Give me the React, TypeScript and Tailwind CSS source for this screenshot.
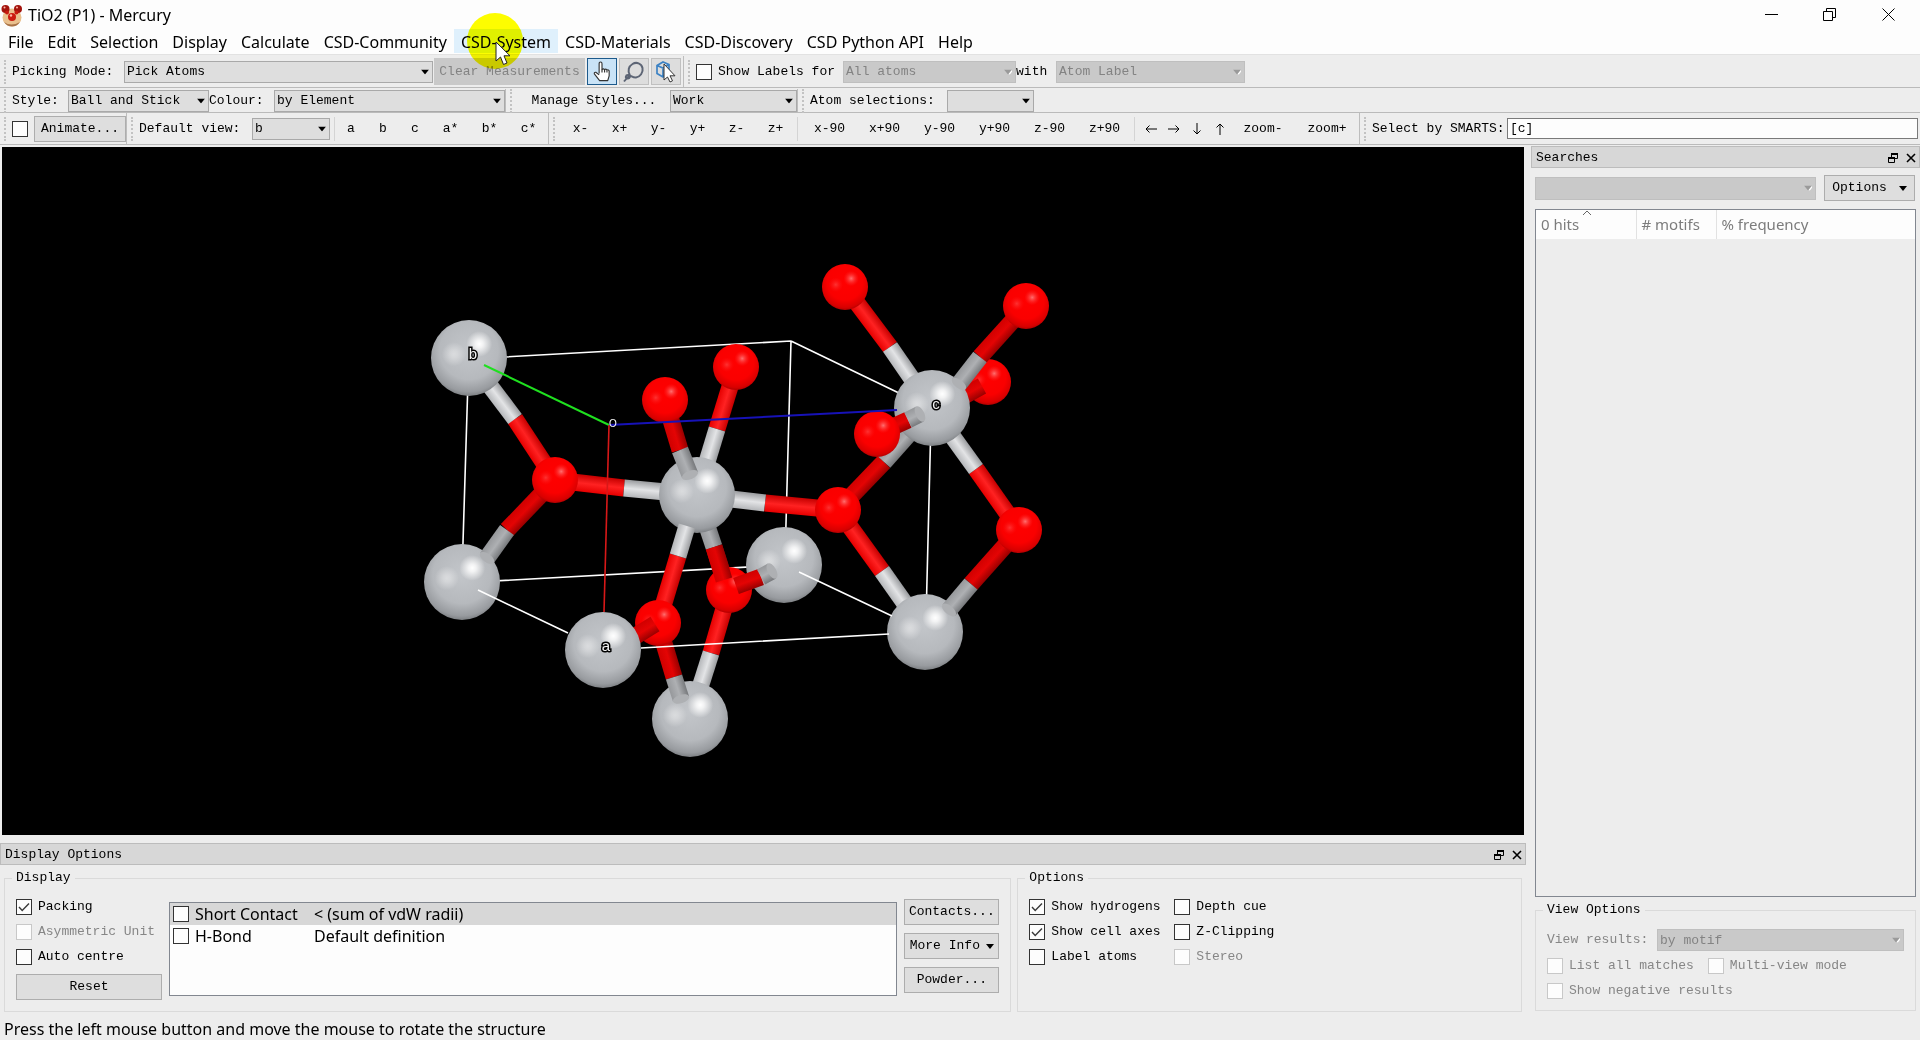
import { useId, useState } from 'react';
import type { ReactNode } from 'react';

const MONO = "font-['Liberation_Mono',monospace] text-[13px]";
const SANS = "font-['Noto_Sans','Open_Sans',sans-serif]";

/* ---------- small controls ---------- */

function Grip() {
  return <span className="ml-1 mr-1.5 h-6 w-0 shrink-0 border-l-2 border-dotted border-[#c2c2c2]" />;
}

function Divider() {
  return <span className="w-px shrink-0 self-stretch bg-[#bdbdbd]" />;
}

interface PickerProps {
  label: string;
  value: string;
  className: string;
  disabled?: boolean;
}

function Picker({ label, value, className, disabled }: PickerProps) {
  return (
    <span className={`relative inline-flex ${className}`}>
      <select
        aria-label={label}
        disabled={disabled}
        defaultValue={value}
        className={`h-full w-full appearance-none border pl-0.5 pr-5 leading-none ${
          disabled ? 'border-[#bfbfbf] bg-[#c9c9c9] text-[#838383] opacity-100' : 'border-[#a9a9a9] bg-[#dedede] text-black'
        }`}
      >
        <option>{value}</option>
      </select>
      <svg viewBox="0 0 8 5" className="pointer-events-none absolute right-1 top-1/2 h-[5px] w-2 -translate-y-1/2">
        {disabled && <path d="M5 5L8 1" stroke="#fff" strokeWidth="1.5" />}
        <path d="M0 0h8L4 5z" fill={disabled ? '#9a9a9a' : '#000'} />
      </svg>
    </span>
  );
}

interface TickProps {
  label: string;
  checked?: boolean;
  disabled?: boolean;
  hideLabel?: boolean;
}

function Tick({ label, checked = false, disabled, hideLabel }: TickProps) {
  const [on, setOn] = useState(checked);
  return (
    <label className={`flex h-4 items-center gap-1.5 whitespace-nowrap ${disabled ? 'text-[#868686]' : 'text-black'}`}>
      <span className="relative flex size-4 shrink-0">
        <input
          type="checkbox"
          aria-label={label}
          checked={on}
          disabled={disabled}
          onChange={(e) => setOn(e.target.checked)}
          className={`size-4 appearance-none border bg-[#fdfdfd] ${disabled ? 'border-[#c8c8c8]' : 'border-[#333333]'}`}
        />
        {on && (
          <svg viewBox="0 0 16 16" className="pointer-events-none absolute inset-0 size-4">
            <path d="M3 8l3.2 3.5L13 4.5" fill="none" stroke="#3a3a3a" strokeWidth="1.4" />
          </svg>
        )}
      </span>
      {!hideLabel && label}
    </label>
  );
}

function PushButton({ children, className = '' }: { children: ReactNode; className?: string }) {
  return (
    <button className={`flex items-center justify-center whitespace-nowrap border border-[#adadad] bg-[#dedede] text-black ${className}`}>
      {children}
    </button>
  );
}

function FlatButtons({ items, className }: { items: string[]; className: string }) {
  return (
    <>
      {items.map((item) => (
        <button key={item} className={`shrink-0 whitespace-nowrap text-center ${className}`}>
          {item}
        </button>
      ))}
    </>
  );
}

function DockTitle({ title }: { title: string }) {
  return (
    <div className="flex h-[22px] shrink-0 items-center border border-[#bcbcbc] bg-[#d7d7d7] pl-1 pr-[3px] pt-0.5">
      <h2 className="flex-1">{title}</h2>
      <button aria-label={`Float ${title}`} className="mr-2">
        <svg viewBox="0 0 10 10" className="size-[10px]" fill="none" stroke="#000" strokeWidth="1">
          <path d="M3.5 4V.5h6v5H7" />
          <path d="M3 1h7" strokeWidth="2" />
          <path d="M.5 4.5h6v5h-6z" />
          <path d="M0 5h7" strokeWidth="2" />
        </svg>
      </button>
      <button aria-label={`Close ${title}`}>
        <svg viewBox="0 0 10 10" className="size-[10px]" stroke="#000" strokeWidth="1.6">
          <path d="M1 1l8 8M9 1L1 9" />
        </svg>
      </button>
    </div>
  );
}

function Arrow({ turn, label }: { turn: number; label: string }) {
  return (
    <button aria-label={label} className="flex w-[23px] shrink-0 justify-center">
      <svg viewBox="0 0 12 12" className="size-3" fill="none" stroke="#000" strokeWidth="1">
        <path transform={`rotate(${turn} 6 6)`} d="M12 6H1M4.5 2.5L1 6l3.5 3.5" />
      </svg>
    </button>
  );
}

/* ---------- structure ---------- */

type Point = [number, number];
type Kind = 'Ti' | 'O';

function Atom({ at: [x, y], kind }: { at: Point; kind: Kind }) {
  const r = kind === 'Ti' ? 38 : 23;
  return (
    <g>
      <circle cx={x} cy={y} r={r} fill={`url(#${kind})`} />
      <circle cx={x + r * 0.27} cy={y - r * 0.37} r={r * 0.34} fill={`url(#${kind}-shine)`} />
      <circle cx={x - r * 0.4} cy={y - r * 0.1} r={r * 0.32} fill={`url(#${kind}-shine)`} opacity="0.45" />
    </g>
  );
}

interface RodProps {
  from: Point;
  to: Point;
  kind: Kind;
  cap?: boolean;
  dim?: boolean;
}

/* Half of a bond, shaded across its width */
function Rod({ from, to, kind, cap, dim }: RodProps) {
  const id = useId();
  const width = 17;
  const [x1, y1] = from;
  const [x2, y2] = to;
  const length = Math.hypot(x2 - x1, y2 - y1);
  let nx = (-(y2 - y1) / length) * (width / 2);
  let ny = ((x2 - x1) / length) * (width / 2);
  if (nx < 0) {
    nx = -nx;
    ny = -ny;
  }
  const shades = kind === 'Ti'
    ? dim ? ['#96989b', '#aeb0b3', '#77797c'] : ['#b4b6b9', '#e3e4e6', '#9a9c9f']
    : dim ? ['#d00000', '#e40404', '#980000'] : ['#e60000', '#ff2222', '#c60000'];
  return (
    <g>
      <linearGradient id={id} gradientUnits="userSpaceOnUse" x1={x1 - nx} y1={y1 - ny} x2={x1 + nx} y2={y1 + ny}>
        <stop offset="0" stopColor={shades[0]} />
        <stop offset="0.5" stopColor={shades[1]} />
        <stop offset="1" stopColor={shades[2]} />
      </linearGradient>
      <path d={`M${x1 - nx} ${y1 - ny}L${x2 - nx} ${y2 - ny}L${x2 + nx} ${y2 + ny}L${x1 + nx} ${y1 + ny}Z`} fill={`url(#${id})`} />
      {cap && (
        <ellipse
          cx={x1}
          cy={y1}
          rx={width / 2}
          ry={width / 4}
          transform={`rotate(${(Math.atan2(ny, nx) * 180) / Math.PI} ${x1} ${y1})`}
          fill={shades[1]}
        />
      )}
    </g>
  );
}

interface BondProps {
  ti: Point;
  mid: Point;
  o: Point;
  cap?: boolean;
  dim?: boolean;
}

function Bond({ ti, mid, o, cap, dim }: BondProps) {
  return (
    <>
      <Rod from={mid} to={o} kind="O" dim={dim} />
      <Rod from={ti} to={mid} kind="Ti" cap={cap} dim={dim} />
    </>
  );
}

function AxisLabel({ at: [x, y], children }: { at: Point; children: string }) {
  return (
    <text x={x} y={y} textAnchor="middle" fontSize="15" fontFamily="Liberation Sans" fill="#f4f4f4" stroke="#000" strokeWidth="3" paintOrder="stroke">
      {children}
    </text>
  );
}

function Structure() {
  return (
    <svg viewBox="2 147 1522 688" className="block h-full w-full bg-black" role="img" aria-label="TiO2 unit cell">
      <defs>
        <radialGradient id="Ti" cx="0.5" cy="0.4" r="0.64">
          <stop offset="0" stopColor="#c3c6ca" />
          <stop offset="0.6" stopColor="#b6b9bd" />
          <stop offset="0.85" stopColor="#989b9f" />
          <stop offset="1" stopColor="#6a6d70" />
        </radialGradient>
        <radialGradient id="O" cx="0.5" cy="0.4" r="0.64">
          <stop offset="0" stopColor="#ff0000" />
          <stop offset="0.6" stopColor="#fa0000" />
          <stop offset="0.85" stopColor="#d80000" />
          <stop offset="1" stopColor="#980000" />
        </radialGradient>
        <radialGradient id="Ti-shine">
          <stop offset="0" stopColor="#fff" />
          <stop offset="0.3" stopColor="#fff" stopOpacity="0.8" />
          <stop offset="1" stopColor="#fff" stopOpacity="0" />
        </radialGradient>
        <radialGradient id="O-shine">
          <stop offset="0" stopColor="#ff7070" />
          <stop offset="0.3" stopColor="#ff4d4d" stopOpacity="0.8" />
          <stop offset="1" stopColor="#ff2020" stopOpacity="0" />
        </radialGradient>
      </defs>

      {/* cell edges behind the atoms */}
      <path
        d="M469 359L791 341M791 341L930 408M791 341L785 560M468 380L462 575M475 582L784 565M931 420L926 620"
        stroke="#fff"
        strokeWidth="1.6"
        fill="none"
      />

      <Atom at={[784, 565]} kind="Ti" />

      {/* left side */}
      <Bond ti={[469, 358]} mid={[515, 419]} o={[555, 480]} />
      <Atom at={[469, 358]} kind="Ti" />
      <Atom at={[462, 582]} kind="Ti" />
      <Bond ti={[487, 558]} mid={[507, 530]} o={[555, 480]} cap dim />
      <Bond ti={[697, 495]} mid={[624, 488]} o={[555, 480]} />
      <Atom at={[555, 480]} kind="O" />

      {/* right side */}
      <Bond ti={[697, 495]} mid={[765, 503]} o={[838, 510]} />
      <Bond ti={[932, 408]} mid={[884, 462]} o={[838, 510]} dim />
      <Bond ti={[925, 632]} mid={[882, 571]} o={[838, 510]} />
      <Atom at={[838, 510]} kind="O" />
      <Bond ti={[932, 408]} mid={[976, 469]} o={[1019, 530]} />
      <Atom at={[925, 632]} kind="Ti" />
      <Bond ti={[949, 610]} mid={[971, 584]} o={[1019, 530]} cap dim />
      <Atom at={[1019, 530]} kind="O" />
      <Bond ti={[932, 408]} mid={[890, 347]} o={[845, 287]} />
      <Atom at={[845, 287]} kind="O" />
      <Atom at={[988, 382]} kind="O" />
      <Rod from={[962, 397]} to={[982, 386]} kind="O" dim />
      <Atom at={[932, 408]} kind="Ti" />
      <Bond ti={[959, 384]} mid={[980, 357]} o={[1026, 306]} cap dim />
      <Atom at={[1026, 306]} kind="O" />
      <Bond ti={[920, 414]} mid={[908, 420]} o={[877, 434]} cap dim />
      <Atom at={[877, 434]} kind="O" />

      {/* centre */}
      <Bond ti={[697, 495]} mid={[717, 429]} o={[736, 367]} />
      <Atom at={[736, 367]} kind="O" />
      <Bond ti={[705, 520]} mid={[714, 547]} o={[725, 581]} dim />
      <Atom at={[697, 495]} kind="Ti" />
      <Bond ti={[690, 475]} mid={[680, 450]} o={[665, 400]} cap dim />
      <Atom at={[665, 400]} kind="O" />

      <Bond ti={[690, 719]} mid={[711, 653]} o={[729, 591]} />
      <Atom at={[729, 590]} kind="O" />
      <Rod from={[714, 547]} to={[724, 580]} kind="O" dim />
      <Rod from={[761, 577]} to={[736, 586]} kind="O" dim />
      <Rod from={[772, 571]} to={[761, 577]} kind="Ti" cap dim />
      <Bond ti={[687, 526]} mid={[678, 556]} o={[658, 623]} />
      <Atom at={[690, 719]} kind="Ti" />
      <Bond ti={[681, 699]} mid={[674, 677]} o={[658, 623]} cap dim />
      <Atom at={[658, 623]} kind="O" />
      <Rod from={[634, 637]} to={[655, 624]} kind="O" dim />
      <Atom at={[603, 650]} kind="Ti" />

      {/* cell edges and axes in front */}
      <path d="M478 590L568 633M641 648L889 634M799 572L892 616" stroke="#fff" strokeWidth="1.6" fill="none" />
      <path d="M484 365L609 425" stroke="#1fe01f" strokeWidth="2" />
      <path d="M609 425L897 410" stroke="#1712b8" strokeWidth="2" />
      <path d="M609 425L604 612" stroke="#d81818" strokeWidth="1.6" />

      <AxisLabel at={[473, 359]}>b</AxisLabel>
      <AxisLabel at={[936, 409]}>c</AxisLabel>
      <AxisLabel at={[606, 651]}>a</AxisLabel>
      <text x="613" y="427" textAnchor="middle" fontSize="10" fontFamily="Liberation Sans" fill="#fff">O</text>
    </svg>
  );
}

/* ---------- window parts ---------- */

const menus = ['File', 'Edit', 'Selection', 'Display', 'Calculate', 'CSD-Community', 'CSD-System', 'CSD-Materials', 'CSD-Discovery', 'CSD Python API', 'Help'];

function TitleBar() {
  return (
    <header className="flex h-[29px] shrink-0 items-center bg-[#fdfdfd]">
      <svg viewBox="0 0 24 24" className="mr-1 size-6">
        <ellipse cx="12" cy="14.5" rx="9.5" ry="9" fill="#e9c08e" />
        <path d="M4 19q7 5 16 0-3 4.500-8 4.500T4 19" fill="#a87348" />
        <circle cx="5.5" cy="6" r="4" fill="#a3130c" />
        <circle cx="18" cy="6" r="4" fill="#a3130c" />
        <circle cx="12" cy="14" r="4" fill="#cc1b10" />
        <circle cx="7" cy="9.5" r="2" fill="#c81a10" />
        <circle cx="16.5" cy="9.5" r="2" fill="#c81a10" />
        <g fill="#ffb9a8">
          <circle cx="4.5" cy="4.5" r="1" />
          <circle cx="17" cy="4.5" r="1" />
          <circle cx="11" cy="12.5" r="1.2" />
        </g>
      </svg>
      <h1 className="flex-1">TiO2 (P1) - Mercury</h1>
      <div className="flex">
        <button aria-label="Minimize" className="flex w-[58px] justify-center">
          <svg viewBox="0 0 13 13" className="size-[13px]" stroke="#000"><path d="M0 6.5h13" /></svg>
        </button>
        <button aria-label="Restore" className="flex w-[58px] justify-center">
          <svg viewBox="0 0 13 13" className="size-[13px]" fill="none" stroke="#000"><path d="M.5 3.500h9v9h-9zM3.500 3V.5h9v9H10" /></svg>
        </button>
        <button aria-label="Close" className="flex w-[62px] justify-center pr-0.5">
          <svg viewBox="0 0 13 13" className="size-[13px]" stroke="#000"><path d="M.5.5l12 12M12.5.5l-12 12" /></svg>
        </button>
      </div>
    </header>
  );
}

function PointerSpot() {
  return (
    <>
      <span className="pointer-events-none absolute left-[467px] top-[13px] size-14 rounded-full bg-[#ffff00] mix-blend-multiply" />
      <svg viewBox="0 0 16 25" className="pointer-events-none absolute left-[495px] top-[41px] h-[25px] w-4">
        <path d="M1 1v19l4.500-4 3 7.500 3.500-1.500-3-7.200h6z" fill="#fff" stroke="#222" strokeWidth="1" />
      </svg>
    </>
  );
}

function PickingBar() {
  return (
    <div className="flex h-8 items-center border-b border-[#bababa]">
      <Grip />
      <span className="w-28 shrink-0">Picking Mode:</span>
      <Picker label="Picking Mode" value="Pick Atoms" className="h-[22px] w-[309px]" />
      <button disabled className="ml-px h-[27px] w-[151px] shrink-0 whitespace-nowrap bg-[#c9c9c9] text-[#838383]">Clear Measurements</button>
      <button aria-label="Pick" className="ml-0.5 flex h-[27px] w-[30px] shrink-0 items-center justify-center border border-[#1d5a8c] bg-[#c9e3f7]">
        <svg viewBox="0 0 20 22" className="h-[21px] w-5" fill="#fff" stroke="#333" strokeWidth="1.2" strokeLinejoin="round">
          <path d="M7 13V3q0-2 1.500-2T10 3v6q1.300-1.500 2.700 0 1.300-1 2.500.5 1.800-.8 2.300 1v5l-1.500 5H7.500L2 13.500q-.5-2 1.500-1.700L7 14.500" />
          <path d="M10 9v3M12.700 9.500V12M15.200 10v2" />
        </svg>
      </button>
      <button aria-label="Lasso" className="ml-0.5 flex h-[27px] w-[30px] shrink-0 items-center justify-center border border-[#c0c0c0] bg-[#dddddd]">
        <svg viewBox="0 0 22 22" className="size-[22px]" fill="none" stroke="#5d6575" strokeWidth="2">
          <path d="M1 20.500C3 18 5 16 7 14.500 4 10 6 5 9.500 3c4-2.500 9-.5 10 4s-2.500 9-6.500 9.500c-3 .3-6-2.500-8-2.500-2.500 0-3 3-.5 3.500 2 .3 2.500-1.500 3-3" />
        </svg>
      </button>
      <button aria-label="Select in 3D" className="ml-0.5 flex h-[27px] w-[30px] shrink-0 items-center justify-center border border-[#c0c0c0] bg-[#dddddd]">
        <svg viewBox="0 0 22 22" className="size-[22px]" fill="none" stroke="#3c82c4" strokeWidth="1.7">
          <path d="M2 4.500L8 1l6 2.500v8L8 16l-6-3.500zM2 4.500L8 7l6-3.500M8 7v9" />
          <path d="M9 3v16l3.500-3 2.500 5 2.500-1.200-2.500-5h5z" fill="#fff" stroke="#333" strokeWidth="1" />
        </svg>
      </button>
      <span className="ml-0.5 flex self-stretch"><Divider /></span>
      <Grip />
      <Tick label="Show Labels for" />
      <span className="w-2 shrink-0" />
      <Picker label="Labelled atoms" value="All atoms" disabled className="h-[22px] w-[173px]" />
      <span className="w-10 shrink-0">with</span>
      <Picker label="Label type" value="Atom Label" disabled className="h-[22px] w-[189px]" />
    </div>
  );
}

function StyleBar() {
  return (
    <div className="flex h-[25px] items-center border-b border-[#bababa] pt-px">
      <Grip />
      <span className="w-14 shrink-0">Style:</span>
      <Picker label="Style" value="Ball and Stick" className="h-[22px] w-[141px]" />
      <span className="w-[65px] shrink-0">Colour:</span>
      <Picker label="Colour" value="by Element" className="h-[22px] w-[231px]" />
      <Divider />
      <Grip />
      <button className="w-[152px] shrink-0 text-center">Manage Styles...</button>
      <Picker label="Saved style" value="Work" className="h-[22px] w-[127px]" />
      <Divider />
      <Grip />
      <span className="w-[137px] shrink-0">Atom selections:</span>
      <Picker label="Atom selections" value="" className="h-[22px] w-[87px]" />
    </div>
  );
}

function ViewBar() {
  return (
    <div className="flex h-8 items-center border-b border-[#bababa]">
      <Grip />
      <Tick label="Animate" hideLabel />
      <PushButton className="ml-1.5 h-[26px] w-[92px] shrink-0">Animate...</PushButton>
      <Divider />
      <Grip />
      <span className="w-[113px] shrink-0">Default view:</span>
      <Picker label="Default view" value="b" className="h-[22px] w-[78px]" />
      <span className="ml-1 h-6 w-px shrink-0 bg-[#d4d4d4]" />
      <FlatButtons items={['a', 'b', 'c']} className="w-8" />
      <FlatButtons items={['a*', 'b*', 'c*']} className="w-[39px]" />
      <Divider />
      <Grip />
      <FlatButtons items={['x-', 'x+', 'y-', 'y+', 'z-', 'z+']} className="w-[39px]" />
      <span className="ml-0.5 mr-1 h-6 w-px shrink-0 bg-[#d4d4d4]" />
      <FlatButtons items={['x-90', 'x+90', 'y-90', 'y+90', 'z-90', 'z+90']} className="w-[55px]" />
      <span className="ml-0.5 mr-1 h-6 w-px shrink-0 bg-[#d4d4d4]" />
      <Arrow turn={0} label="Left" />
      <Arrow turn={180} label="Right" />
      <Arrow turn={-90} label="Down" />
      <Arrow turn={90} label="Up" />
      <FlatButtons items={['zoom-', 'zoom+']} className="w-16" />
      <Divider />
      <Grip />
      <label htmlFor="smarts" className="w-[135px] shrink-0">Select by SMARTS:</label>
      <input id="smarts" defaultValue="[c]" className="mr-0.5 h-[21px] min-w-0 flex-1 border border-[#7a7a7a] bg-[#fdfdfd] px-0.5" />
    </div>
  );
}

function Group({ title, className, children }: { title: string; className: string; children: ReactNode }) {
  return (
    <fieldset className={`min-w-0 border border-[#dadada] ${className}`}>
      <legend className="ml-[7px] px-1 leading-[18px]">{title}</legend>
      {children}
    </fieldset>
  );
}

const contacts = [
  { name: 'Short Contact', definition: '< (sum of vdW radii)', selected: true },
  { name: 'H-Bond', definition: 'Default definition', selected: false },
];

function DisplayOptions() {
  return (
    <section className="mt-2 flex h-[172px] shrink-0 flex-col">
      <DockTitle title="Display Options" />
      <div className="mt-1 flex h-[143px] gap-1.5 pl-1 pr-1">
        <Group title="Display" className="h-full flex-[2]">
          <div className="flex px-[11px] pt-3">
            <div className="flex w-[146px] shrink-0 flex-col gap-[9px]">
              <Tick label="Packing" checked />
              <Tick label="Asymmetric Unit" disabled />
              <Tick label="Auto centre" />
              <PushButton className="h-[26px] w-full">Reset</PushButton>
            </div>
            <div className={`ml-[7px] mt-[3px] h-[94px] min-w-0 flex-1 border border-[#828790] bg-[#fdfdfd] text-base ${SANS}`}>
              {contacts.map(({ name, definition, selected }) => (
                <div key={name} className={`flex h-[22px] items-center pl-[3px] ${selected ? 'bg-[#d7d7d7]' : ''}`}>
                  <span className="w-[141px]"><Tick label={name} /></span>
                  <span>{definition}</span>
                </div>
              ))}
            </div>
            <div className="ml-[7px] flex w-[95px] shrink-0 flex-col gap-2">
              <PushButton className="h-[26px]">Contacts...</PushButton>
              <PushButton className="h-[26px] gap-1.5">
                More Info
                <svg viewBox="0 0 8 5" className="h-[5px] w-2"><path d="M0 0h8L4 5z" /></svg>
              </PushButton>
              <PushButton className="h-[26px]">Powder...</PushButton>
            </div>
          </div>
        </Group>
        <Group title="Options" className="h-full flex-1">
          <div className="grid grid-cols-[145px_1fr] gap-y-[9px] pl-[11px] pt-3">
            <Tick label="Show hydrogens" checked />
            <Tick label="Depth cue" />
            <Tick label="Show cell axes" checked />
            <Tick label="Z-Clipping" />
            <Tick label="Label atoms" />
            <Tick label="Stereo" disabled />
          </div>
        </Group>
      </div>
    </section>
  );
}

function Searches() {
  return (
    <aside className="mt-px flex w-[389px] shrink-0 flex-col">
      <DockTitle title="Searches" />
      <div className="mt-[7px] flex items-center gap-2 pl-1 pr-[5px]">
        <Picker label="Search" value="" disabled className="h-[23px] flex-1" />
        <PushButton className="h-[26px] w-[91px] gap-3">
          Options
          <svg viewBox="0 0 8 5" className="h-[5px] w-2"><path d="M0 0h8L4 5z" /></svg>
        </PushButton>
      </div>
      <div className="mx-1 mt-2 flex-1 border border-[#828790]">
        <table className={`w-full table-fixed text-[15px] text-[#7c7c7c] ${SANS}`}>
          <thead>
            <tr className="h-[29px] bg-[#fdfdfd] text-left">
              <th className="relative w-[100px] border-r border-[#e2e2e2] pl-[5px] font-normal">
                0 hits
                <svg viewBox="0 0 10 6" className="absolute left-[46px] top-0 h-1.5 w-2.5" fill="none" stroke="#666"><path d="M1 5l4-4 4 4" /></svg>
              </th>
              <th className="w-20 border-r border-[#e2e2e2] pl-[5px] font-normal">
                # motifs
              </th>
              <th className="pl-[5px] font-normal">% frequency</th>
            </tr>
          </thead>
        </table>
      </div>
      <Group title="View Options" className="mx-1 mb-1 mt-1 h-[110px] shrink-0">
        <div className="flex flex-col gap-[7px] px-[11px] pt-2.5 text-[#868686]">
          <div className="flex items-center">
            <span className="w-[110px] shrink-0">View results:</span>
            <Picker label="View results" value="by motif" disabled className="h-[22px] flex-1" />
          </div>
          <div className="flex gap-3.5">
            <Tick label="List all matches" disabled />
            <Tick label="Multi-view mode" disabled />
          </div>
          <div className="mt-0.5">
            <Tick label="Show negative results" disabled />
          </div>
        </div>
      </Group>
    </aside>
  );
}

export default function App() {
  return (
    <div className={`relative flex h-screen flex-col overflow-hidden bg-[#ededed] text-black ${MONO}`}>
      <div className={`shrink-0 text-base ${SANS}`}>
        <TitleBar />
        <nav className="flex h-[26px] border-b border-[#e2e2e2] bg-[#fdfdfd] pl-px">
          {menus.map((menu) => (
            <button key={menu} className={`h-6 whitespace-nowrap px-[7px] leading-[26px] ${menu === 'CSD-System' ? 'bg-[#dff0fc]' : ''}`}>
              {menu}
            </button>
          ))}
        </nav>
      </div>
      <div className="mt-px shrink-0">
        <PickingBar />
        <StyleBar />
        <ViewBar />
      </div>
      <div className="flex min-h-0 flex-1">
        <div className="mr-[5px] flex min-w-0 flex-1 flex-col">
          <main className="mx-0.5 mt-0.5 min-h-0 flex-1">
            <Structure />
          </main>
          <DisplayOptions />
        </div>
        <Searches />
      </div>
      <footer className={`h-[25px] shrink-0 pl-1 text-base leading-7 ${SANS}`}>
        Press the left mouse button and move the mouse to rotate the structure
      </footer>
      <PointerSpot />
    </div>
  );
}
